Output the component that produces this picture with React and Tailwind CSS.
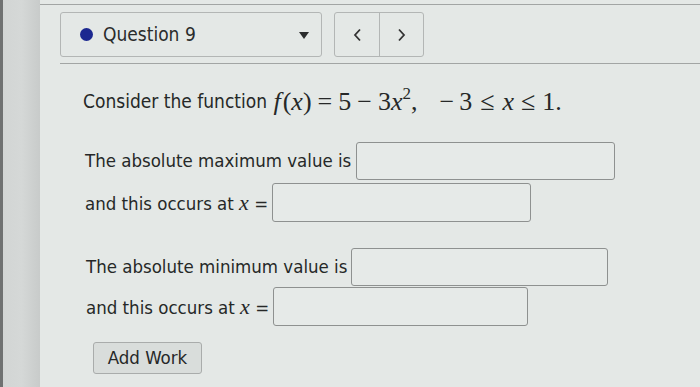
import React from "react";

const sans = { fontFamily: '"DejaVu Sans Condensed", "Liberation Sans", sans-serif' };
const serif = { fontFamily: '"Liberation Serif", "DejaVu Serif", serif' };

function MathX() {
  return <span className="italic text-[22px]" style={serif}>x</span>;
}

function Input({ w }) {
  return <div className={`h-full ${w} border border-[#8e9190] rounded-[3px] bg-[#e6eae8]`} />;
}

export default function App() {
  return (
    <div className="w-[700px] h-[387px] flex overflow-hidden text-[#262828]" style={sans}>
      <div className="w-[3px] bg-[#6f7171]" />
      <div className="w-[37px] bg-gradient-to-r from-[#d2d5d4] via-[#d5d8d7] to-[#c8cbca]" />
      <div className="flex-1 bg-[#e4e8e6] pt-[4px] flex flex-col">
        <div className="border-t border-[#a2a5a4]" />
        <div className="ml-[20px] mt-[7px] flex h-[45px] gap-[12px]">
          <div className="w-[262px] h-full border border-[#b3b6b5] rounded-[3px] flex items-center pl-[19px] pr-[10px]">
            <span className="w-[13px] h-[13px] rounded-full bg-[#1c2890]" />
            <span className="ml-[10px] text-[19px] leading-none text-[#2a2c2c]">Question 9</span>
            <span className="ml-auto mr-[2px] mt-[2px] w-0 h-0 border-l-[5px] border-r-[5px] border-t-[7px] border-l-transparent border-r-transparent border-t-[#2b2d2d]" />
          </div>
          <div className="w-[90px] h-full border border-[#b3b6b5] rounded-[3px] flex">
            <div className="w-[45px] h-full border-r border-[#b3b6b5] flex items-center justify-center">
              <svg width="9" height="14" viewBox="0 0 9 14"><path d="M7 1.5 L2 7 L7 12.5" fill="none" stroke="#333" strokeWidth="1.8" /></svg>
            </div>
            <div className="flex-1 h-full flex items-center justify-center">
              <svg width="9" height="14" viewBox="0 0 9 14"><path d="M2 1.5 L7 7 L2 12.5" fill="none" stroke="#333" strokeWidth="1.8" /></svg>
            </div>
          </div>
        </div>
        <div className="mt-[6px] ml-[20px] border-t border-[#a2a5a4]" />

        <div className="mt-[25px] ml-[43px] h-[24px] flex items-center text-[19px] whitespace-pre">
          <span>Consider the function </span>
          <span className="text-[26px] flex items-baseline" style={serif}>
            <span className="italic ml-[1px]">f</span>
            <span className="ml-[2px]">(</span>
            <span className="italic">x</span>
            <span>)</span>
            <span className="mx-[6px]">=</span>
            <span>5</span>
            <span className="mx-[6px]">−</span>
            <span>3</span>
            <span className="italic">x</span>
            <span className="text-[17px] relative top-[-11px]">2</span>
            <span>,</span>
            <span className="ml-[22px]">−</span>
            <span className="ml-[5px]">3</span>
            <span className="mx-[8px]">≤</span>
            <span className="italic">x</span>
            <span className="mx-[7px]">≤</span>
            <span>1.</span>
          </span>
        </div>

        <div className="mt-[29px] ml-[45px] h-[38px] flex items-center text-[18.5px]">
          <span className="mr-[5px]">The absolute maximum value is</span>
          <Input w="w-[259px]" />
        </div>
        <div className="mt-[3px] ml-[45px] h-[39px] flex items-center text-[18.5px] whitespace-pre">
          <span className="mr-[4px]">and this occurs at <MathX /> =</span>
          <Input w="w-[259px]" />
        </div>

        <div className="mt-[26px] ml-[46px] h-[38px] flex items-center text-[18.5px]">
          <span className="mr-[4px]">The absolute minimum value is</span>
          <Input w="w-[257px]" />
        </div>
        <div className="mt-[1px] ml-[46px] h-[39px] flex items-center text-[18.5px] whitespace-pre">
          <span className="mr-[4px]">and this occurs at <MathX /> =</span>
          <Input w="w-[255px]" />
        </div>

        <div className="mt-[16px] ml-[53px]">
          <div className="w-[109px] h-[32px] border border-[#a9acab] rounded-[3px] bg-[#d9dddb] flex items-center justify-center text-[18.5px] text-[#262828]">
            Add Work
          </div>
        </div>
      </div>
    </div>
  );
}
